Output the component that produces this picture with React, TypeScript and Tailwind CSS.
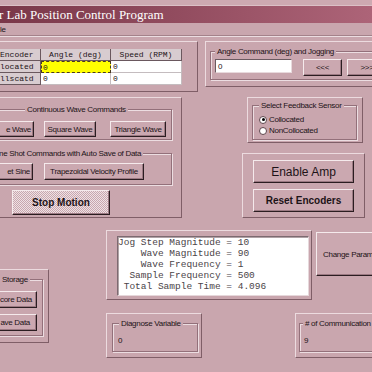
import React from "react";

const sm =
  "font-['Liberation_Sans',sans-serif] text-[8px] tracking-[-0.3px] leading-[11px] text-[#1d1317] whitespace-nowrap";
const mono = "font-['Liberation_Mono',monospace] text-[8px] leading-[11px] text-[#1d1317] whitespace-nowrap";
const raised =
  "border border-t-[#ecdbdf] border-l-[#ecdbdf] border-r-[#7f5e67] border-b-[#7f5e67]";
const etched =
  "relative border border-[#93707a] shadow-[inset_1px_1px_0_#ecdde1,1px_1px_0_#ecdde1]";
const btnBase =
  "flex items-center shrink-0 overflow-hidden border border-t-[#f5eaec] border-l-[#f5eaec] border-r-[#2b1d21] border-b-[#2b1d21] shadow-[inset_-1px_-1px_0_#9b7982] bg-[#cba8b0]";

function Legend({ cls, children }: { cls: string; children: React.ReactNode }) {
  return <span className={`absolute -top-[6px] px-[2px] bg-[#c9a6ae] ${sm} ${cls}`}>{children}</span>;
}

function Btn({ cls, children, text = sm }: { cls: string; children: React.ReactNode; text?: string }) {
  return (
    <div className={`${btnBase} ${cls}`}>
      <span className={text}>{children}</span>
    </div>
  );
}

function Radio({ checked, label }: { checked: boolean; label: string }) {
  return (
    <div className="h-[11px] flex items-center">
      <div className="w-[8px] h-[8px] rounded-full bg-white border border-[#5e464d] flex items-center justify-center">
        {checked && <div className="w-[3px] h-[3px] rounded-full bg-black" />}
      </div>
      <span className={`ml-[2px] ${sm}`}>{label}</span>
    </div>
  );
}

function Table() {
  const head = "h-[12px] bg-[#d8ccd0] border-r border-b border-[#6a585e] flex items-center";
  const cell = "h-[12px] bg-white border-r border-b border-[#c4bcbf] flex items-center pl-[2px]";
  return (
    <div className="w-[182px] grid grid-cols-[41px_70px_71px]">
      <div className={`${head}`}><span className={mono}>Encoder</span></div>
      <div className={`${head} justify-center`}><span className={mono}>Angle (deg)</span></div>
      <div className={`${head} justify-center`}><span className={mono}>Speed (RPM)</span></div>
      <div className={`${head}`}><span className={mono}>located</span></div>
      <div className="h-[12px] bg-[#ffff00] border border-dashed border-[#4a3a20] flex items-center pl-[1px]">
        <span className={mono}>0</span>
      </div>
      <div className={cell}><span className={mono}>0</span></div>
      <div className={`${head}`}><span className={mono}>llscatd</span></div>
      <div className={cell}><span className={mono}>0</span></div>
      <div className={cell}><span className={mono}>0</span></div>
    </div>
  );
}

export default function App() {
  const params = [
    "Jog Step Magnitude = 10",
    "    Wave Magnitude = 90",
    "    Wave Frequency = 1",
    "  Sample Frequency = 500",
    " Total Sample Time = 4.096",
  ];
  return (
    <div className="w-[372px] h-[372px] overflow-hidden bg-[#c9a6ae] flex flex-col">
      <div className="h-[6px] shrink-0 bg-[#cda9b1] border-b border-[#dcc0c6]" />
      <div className="h-[17px] shrink-0 bg-linear-to-r from-[#7a3749] to-[#ad6478] flex items-center">
        <span className="ml-[-1px] font-['Liberation_Serif',serif] text-[13px] leading-[17px] text-white whitespace-nowrap">
          r Lab Position Control Program
        </span>
      </div>
      <div className="h-[12px] shrink-0 flex items-center">
        <span className={sm}>le</span>
      </div>
      <div className="h-[2px] shrink-0 border-t border-[#a4828a] border-b border-b-[#ecdde1]" />

      {/* Row A */}
      <div className="mt-[4px] flex items-start shrink-0">
        <div className={`ml-[-2px] w-[200px] h-[51px] pt-[7px] pl-[1px] shrink-0 ${raised}`}>
          <Table />
        </div>
        <div className={`ml-[7px] w-[180px] h-[46px] pt-[9px] pl-[4px] shrink-0 ${raised}`}>
          <div className={`w-[170px] h-[29px] pt-[7px] pl-[4px] flex items-start ${etched}`}>
            <Legend cls="left-[4px]">Angle Command (deg) and Jogging</Legend>
            <div className="w-[77px] h-[14px] bg-white border border-t-[#6a5a60] border-l-[#6a5a60] border-r-[#e8dadd] border-b-[#e8dadd] flex items-center pl-[2px] shrink-0">
              <span className={sm}>0</span>
            </div>
            <Btn cls="ml-[11px] w-[39px] h-[17px] justify-center">&lt;&lt;&lt;</Btn>
            <Btn cls="ml-[5px] w-[40px] h-[17px] justify-center">&gt;&gt;&gt;</Btn>
          </div>
        </div>
      </div>

      {/* Row B */}
      <div className="mt-[5px] flex items-start shrink-0">
        <div className={`ml-[-2px] w-[184px] h-[121px] pt-[11px] flex flex-col shrink-0 ${raised}`}>
          <div className={`ml-[-3px] w-[176px] h-[31px] pt-[11px] flex items-start ${etched}`}>
            <Legend cls="left-[28px]">Continuous Wave Commands</Legend>
            <Btn cls="w-[37px] h-[16px] justify-end pr-[2px]">e Wave</Btn>
            <Btn cls="ml-[10px] w-[52px] h-[16px] justify-center">Square Wave</Btn>
            <Btn cls="ml-[14px] w-[56px] h-[16px] justify-center">Triangle Wave</Btn>
          </div>
          <div className={`mt-[13px] ml-[-3px] w-[176px] h-[32px] pt-[9px] flex items-start ${etched}`}>
            <Legend cls="left-[0px]">ne Shot Commands with Auto Save of Data</Legend>
            <Btn cls="w-[36px] h-[17px] justify-end pr-[2px]">et Sine</Btn>
            <Btn cls="ml-[11px] w-[100px] h-[17px] justify-center">Trapezoidal Velocity Profile</Btn>
          </div>
          <div className={`${btnBase} mt-[5px] ml-[13px] w-[98px] h-[25px] justify-center bg-[repeating-conic-gradient(#eee2e5_0%_25%,#c9a6ae_0%_50%)] bg-[length:2px_2px]`}>
            <span className="font-['Liberation_Sans',sans-serif] text-[10px] font-bold text-[#1d1317]">Stop Motion</span>
          </div>
        </div>

        <div className="ml-[60px] flex flex-col shrink-0">
          <div className={`ml-[5px] w-[116px] h-[46px] pt-[7px] pl-[4px] ${raised}`}>
            <div className={`w-[105px] h-[35px] pt-[8px] pl-[6px] flex flex-col ${etched}`}>
              <Legend cls="left-[6px]">Select Feedback Sensor</Legend>
              <Radio checked label="Collocated" />
              <Radio checked={false} label="NonCollocated" />
            </div>
          </div>
          <div className={`mt-[10px] w-[123px] h-[65px] pt-[6px] pl-[10px] flex flex-col ${raised}`}>
            <Btn
              cls="w-[101px] h-[23px] justify-center"
              text="font-['Liberation_Sans',sans-serif] text-[12px] text-[#1d1317]"
            >
              Enable Amp
            </Btn>
            <Btn
              cls="mt-[6px] w-[101px] h-[23px] justify-center"
              text="font-['Liberation_Sans',sans-serif] text-[10px] font-bold text-[#1d1317]"
            >
              Reset Encoders
            </Btn>
          </div>
        </div>
      </div>

      {/* Row C */}
      <div className="flex items-start shrink-0">
        <div className={`ml-[-2px] mt-[51px] w-[51px] h-[74px] pt-[9px] flex flex-col shrink-0 ${raised}`}>
          <div className={`ml-[-3px] w-[47px] h-[57px] pt-[11px] flex flex-col ${etched}`}>
            <Legend cls="left-[3px]">Storage</Legend>
            <Btn cls="w-[40px] h-[17px] justify-end pr-[4px]">core Data</Btn>
            <Btn cls="mt-[6px] w-[40px] h-[17px] justify-end pr-[6px]">ave Data</Btn>
          </div>
        </div>

        <div className="ml-[57px] flex flex-col shrink-0">
          <div className="mt-[12px] flex items-start">
            <div className={`w-[206px] h-[70px] pt-[5px] pl-[10px] shrink-0 ${raised}`}>
              <div className="w-[192px] h-[60px] bg-white border border-t-[#7c6a70] border-l-[#7c6a70] border-r-[#e6d8db] border-b-[#e6d8db] shadow-[inset_1px_1px_0_#b0a2a6] flex flex-col">
                {params.map((p) => (
                  <div
                    key={p}
                    className="font-['Liberation_Mono',monospace] text-[9.5px] leading-[11px] text-[#4a4448] whitespace-pre"
                  >
                    {p}
                  </div>
                ))}
              </div>
            </div>
            <Btn cls="ml-[4px] mt-[2px] w-[60px] h-[44px] justify-start pl-[6px]">Change Param</Btn>
          </div>
          <div className="mt-[13px] flex items-start">
            <div className={`w-[96px] h-[45px] pt-[9px] pl-[5px] shrink-0 ${raised}`}>
              <div className={`w-[86px] h-[29px] pt-[11px] pl-[5px] flex items-start ${etched}`}>
                <Legend cls="left-[6px]">Diagnose Variable</Legend>
                <span className={sm}>0</span>
              </div>
            </div>
            <div className={`ml-[93px] w-[80px] h-[45px] pt-[9px] pl-[3px] shrink-0 ${raised}`}>
              <div className={`w-[80px] h-[29px] pt-[11px] pl-[4px] flex items-start ${etched}`}>
                <Legend cls="left-[3px]"># of Communication</Legend>
                <span className={sm}>9</span>
              </div>
            </div>
          </div>
        </div>
      </div>
    </div>
  );
}
